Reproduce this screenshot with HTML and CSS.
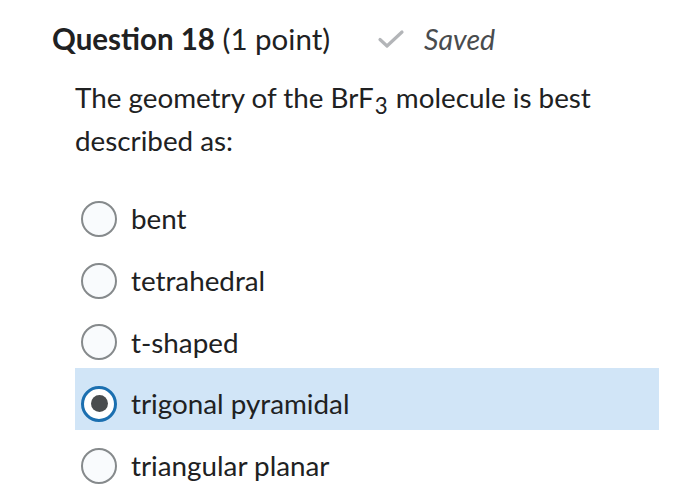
FILE: index.html
```html
<!DOCTYPE html>
<html>
<head>
<meta charset="utf-8">
<link rel="stylesheet" href="styles.css">
</head>
<body>
<div class="page">
  <div class="header">
    <h2 class="title"><strong>Question 18</strong> (1 point)</h2>
    <div class="saved">
      <svg class="check" width="28" height="20" viewBox="0 0 28 20"><path d="M3 10.5 L10 17 L25 3" fill="none" stroke="#b3b5b8" stroke-width="3.2" stroke-linecap="round" stroke-linejoin="round"/></svg>
      <span>Saved</span>
    </div>
  </div>
  <p class="question">The geometry of the BrF<sub>3</sub> molecule is best described as:</p>
  <div class="options">
    <label class="option"><span class="radio"></span><span class="label">bent</span></label>
    <label class="option"><span class="radio"></span><span class="label">tetrahedral</span></label>
    <label class="option"><span class="radio"></span><span class="label">t-shaped</span></label>
    <label class="option selected"><span class="radio"><span class="dot"></span></span><span class="label">trigonal pyramidal</span></label>
    <label class="option"><span class="radio"></span><span class="label">triangular planar</span></label>
  </div>
</div>
</body>
</html>
```
FILE: styles.css
```css
html, body {
  margin: 0;
  padding: 0;
  background: #ffffff;
}
body {
  font-family: Lato, "Noto Sans", sans-serif;
  color: #202122;
}
.page {
  padding: 18px 0 0 0;
}
.header {
  display: flex;
  align-items: center;
  padding-left: 52px;
  height: 42px;
}
.title {
  margin: 0;
  font-size: 29.5px;
  font-weight: 400;
  line-height: 42px;
}
.title strong {
  font-weight: 700;
}
.saved {
  display: flex;
  align-items: center;
  margin-left: 47px;
  color: #494c4e;
  font-style: italic;
  font-size: 28.5px;
}
.saved .check {
  margin-right: 19px;
}
.question {
  margin: 16px 0 0 0;
  padding-left: 75px;
  width: 560px;
  font-size: 27.8px;
  line-height: 43px;
}
.question sub {
  font-size: 0.8em;
  line-height: 0;
  vertical-align: baseline;
  position: relative;
  top: 0.25em;
  margin: 0 1px;
}
.options {
  display: flex;
  flex-direction: column;
  margin: 21px 0 0 75px;
  width: 584px;
}
.option {
  display: flex;
  align-items: center;
  height: 61.75px;
  box-sizing: border-box;
  padding: 10px 0 0 6px;
  font-size: 27.8px;
}
.option.selected {
  background: #d1e5f7;
  padding-top: 9px;
}
.radio {
  width: 36px;
  height: 36px;
  box-sizing: border-box;
  border: 2px solid #868a8c;
  border-radius: 50%;
  background: #f9fbfd;
  display: flex;
  align-items: center;
  justify-content: center;
  flex: none;
}
.selected .radio {
  border: 3px solid #1b6fb0;
  background: #ffffff;
}
.dot {
  width: 17px;
  height: 17px;
  border-radius: 50%;
  background: #494c4e;
}
.label {
  margin-left: 14px;
}
```
